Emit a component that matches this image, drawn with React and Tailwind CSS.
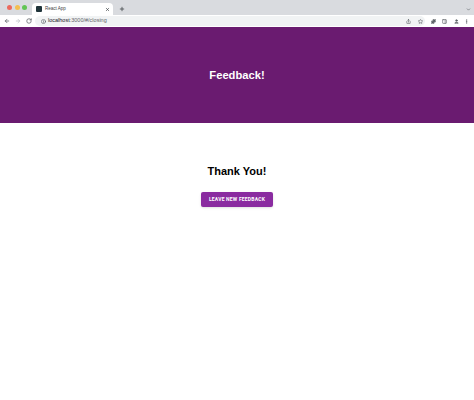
import { ArrowLeft, ArrowRight, RotateCw, Info, Share, Star, Puzzle, PanelRight, User, EllipsisVertical, X, Plus, ChevronDown } from "lucide-react";

function ChromeBar() {
  return (
    <div className="flex flex-col">
      {/* Tab strip */}
      <div className="flex h-[15px] items-end bg-[#d9dbdf]">
        <div className="flex h-[15px] w-[32px] items-center gap-[2.5px] pl-[7px]">
          <span className="size-[5px] rounded-full bg-[#ec6a5e]" />
          <span className="size-[5px] rounded-full bg-[#f4bf4f]" />
          <span className="size-[5px] rounded-full bg-[#61c554]" />
        </div>
        <div className="flex h-[12px] w-[81px] items-center rounded-t-[4px] bg-white pl-[4px] pr-[3px]">
          <span className="size-[6px] rounded-[1px] bg-[#20343a]" />
          <span className="ml-[3px] text-[4.5px] leading-none text-[#3c4043]">React App</span>
          <X className="ml-auto size-[5px] text-[#3c4043]" strokeWidth={3} />
        </div>
        <div className="flex h-[12px] w-[18px] items-center justify-center">
          <Plus className="size-[6px] text-[#3c4043]" strokeWidth={3} />
        </div>
        <div className="ml-auto flex h-[12px] items-center pr-[3px]">
          <ChevronDown className="size-[5px] text-[#5f6368]" strokeWidth={3} />
        </div>
      </div>
      {/* Address bar */}
      <div className="flex h-[12px] items-center bg-white pl-[4px] pr-[5px]">
        <ArrowLeft className="size-[6px] text-[#5f6368]" strokeWidth={3} />
        <ArrowRight className="ml-[5px] size-[6px] text-[#bdc1c6]" strokeWidth={3} />
        <RotateCw className="ml-[5px] size-[6px] text-[#5f6368]" strokeWidth={3} />
        <div className="ml-[3px] flex h-[10px] flex-1 items-center rounded-full bg-[#f1f3f4] pl-[6px] pr-[2px]">
          <Info className="size-[5px] text-[#5f6368]" strokeWidth={3} />
          <span className="ml-[2px] text-[5.5px] leading-none text-[#5f6368]">
            <span className="text-[#202124]">localhost</span>:3000/#/closing
          </span>
          <Share className="ml-auto size-[5px] text-[#5f6368]" strokeWidth={3} />
          <Star className="ml-[7px] size-[5px] text-[#5f6368]" strokeWidth={3} />
        </div>
        <Puzzle className="ml-[6px] size-[5px] fill-[#5f6368] text-[#5f6368]" strokeWidth={3} />
        <PanelRight className="ml-[6px] size-[5px] text-[#5f6368]" strokeWidth={3} />
        <User className="ml-[7px] size-[5px] fill-[#5f6368] text-[#5f6368]" strokeWidth={3} />
        <EllipsisVertical className="ml-[5px] size-[5px] text-[#5f6368]" strokeWidth={3} />
      </div>
    </div>
  );
}

export default function App() {
  return (
    <div className="flex h-[400px] w-[474px] flex-col bg-white font-['Liberation_Sans',sans-serif]">
      <ChromeBar />

      {/* Header */}
      <div className="flex h-[96px] items-center justify-center bg-[#6a1b70]">
        <h1 className="text-[11.2px] font-bold text-white">Feedback!</h1>
      </div>

      {/* Closing */}
      <div className="flex flex-col items-center pt-[40px]">
        <h2 className="text-[11px] leading-[16px] font-bold text-black">Thank You!</h2>
        <button className="mt-[13px] flex h-[15px] w-[72px] items-center justify-center rounded-[2px] bg-[#8a2ba0] font-['Roboto',sans-serif] text-[5px] font-bold tracking-[0.2px] text-white shadow-sm">
          LEAVE NEW FEEDBACK
        </button>
      </div>
    </div>
  );
}
